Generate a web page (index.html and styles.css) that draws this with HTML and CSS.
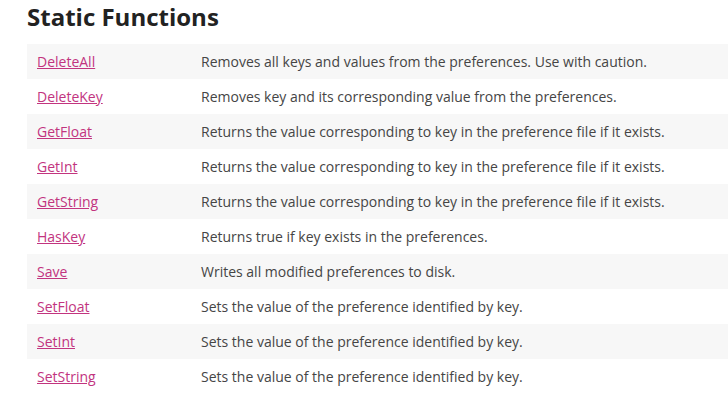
FILE: index.html
```html
<!DOCTYPE html>
<html>
<head>
<meta charset="utf-8">
<link rel="stylesheet" href="styles.css">
</head>
<body>
<div class="section">
  <h2 class="title">Static Functions</h2>
  <table class="funcs">
    <tr><td class="name"><a href="#">DeleteAll</a></td><td class="desc">Removes all keys and values from the preferences. Use with caution.</td></tr>
    <tr><td class="name"><a href="#">DeleteKey</a></td><td class="desc">Removes key and its corresponding value from the preferences.</td></tr>
    <tr><td class="name"><a href="#">GetFloat</a></td><td class="desc">Returns the value corresponding to key in the preference file if it exists.</td></tr>
    <tr><td class="name"><a href="#">GetInt</a></td><td class="desc">Returns the value corresponding to key in the preference file if it exists.</td></tr>
    <tr><td class="name"><a href="#">GetString</a></td><td class="desc">Returns the value corresponding to key in the preference file if it exists.</td></tr>
    <tr><td class="name"><a href="#">HasKey</a></td><td class="desc">Returns true if key exists in the preferences.</td></tr>
    <tr><td class="name"><a href="#">Save</a></td><td class="desc">Writes all modified preferences to disk.</td></tr>
    <tr><td class="name"><a href="#">SetFloat</a></td><td class="desc">Sets the value of the preference identified by key.</td></tr>
    <tr><td class="name"><a href="#">SetInt</a></td><td class="desc">Sets the value of the preference identified by key.</td></tr>
    <tr><td class="name"><a href="#">SetString</a></td><td class="desc">Sets the value of the preference identified by key.</td></tr>
  </table>
</div>
</body>
</html>
```
FILE: styles.css
```css
html, body {
  margin: 0;
  padding: 0;
  background: #fff;
  overflow: hidden;
}
body {
  font-family: "Open Sans", sans-serif;
  color: #454545;
}
.section {
  padding: 2px 0 0 27px;
}
.title {
  margin: 0 0 12px 0;
  font-size: 24px;
  font-weight: 700;
  color: #222;
  line-height: 30px;
}
.funcs {
  border-collapse: collapse;
  width: 720px;
}
.funcs tr {
  height: 35px;
}
.funcs tr:nth-child(odd) {
  background: #f7f7f7;
}
.funcs td {
  padding: 0 10px;
  font-size: 14px;
  line-height: 20px;
  vertical-align: middle;
}
.funcs td.name {
  width: 144px;
}
.funcs a {
  color: #c2347f;
  text-decoration: underline;
}
```
